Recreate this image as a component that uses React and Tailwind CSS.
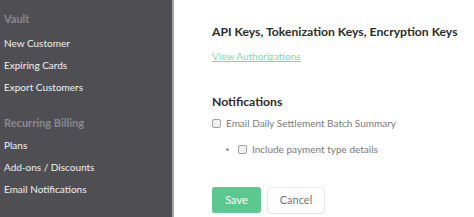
export default function App() {
  const font = { fontFamily: "Lato, 'Open Sans', sans-serif" };
  return (
    <div className="flex w-[474px] h-[217px] overflow-hidden bg-white" style={font}>
      <aside className="w-[174px] shrink-0 bg-[#4f4e53] border-r-2 border-[#a6a5a9] pl-[4px] pt-[8px] text-[10px]">
        <div className="h-[22px] flex items-center text-[11px] font-bold text-[#8b8a8f]">Vault</div>
        <div className="mt-[2px] h-[22px] flex items-center text-[#f2f2f2]">New Customer</div>
        <div className="h-[22px] flex items-center text-[#f2f2f2]">Expiring Cards</div>
        <div className="h-[22px] flex items-center text-[#f2f2f2]">Export Customers</div>
        <div className="mt-[14px] h-[22px] flex items-center text-[11px] font-bold text-[#8b8a8f]">Recurring Billing</div>
        <div className="h-[22px] flex items-center text-[#f2f2f2]">Plans</div>
        <div className="h-[22px] flex items-center text-[#f2f2f2]">Add-ons / Discounts</div>
        <div className="h-[22px] flex items-center text-[#f2f2f2]">Email Notifications</div>
      </aside>
      <main className="flex-1 pl-[38px] pt-[23px]">
        <h2 className="text-[12.2px] font-bold text-[#2b2b2b] leading-[18px]">API Keys, Tokenization Keys, Encryption Keys</h2>
        <a className="block mt-[8px] text-[10px] leading-[14px] text-[#86d7ad] underline">View Authorizations</a>
        <h2 className="mt-[30px] text-[12.2px] font-bold text-[#2b2b2b] leading-[18px]">Notifications</h2>
        <label className="mt-[5px] flex items-center gap-[5px] text-[10px] text-[#7a7a7a] leading-[14px]">
          <span className="w-[9px] h-[9px] border border-[#a0a0a0] rounded-[2px] bg-[#f0f0f0]"></span>
          Email Daily Settlement Batch Summary
        </label>
        <div className="mt-[12px] ml-[14px] flex items-center text-[10px] text-[#7a7a7a] leading-[14px]">
          <span className="w-[3px] h-[3px] rounded-full bg-[#9a9a9a] mr-[9px]"></span>
          <span className="w-[9px] h-[9px] border border-[#a0a0a0] rounded-[2px] bg-[#f0f0f0] mr-[5px]"></span>
          Include payment type details
        </div>
        <div className="mt-[31px] flex gap-[6px]">
          <button className="w-[49px] h-[26px] rounded-[3px] bg-[#5cc78f] text-white text-[11px]">Save</button>
          <button className="w-[58px] h-[27px] rounded-[3px] bg-white border border-[#e6e6e6] text-[#777] text-[11px]">Cancel</button>
        </div>
      </main>
    </div>
  );
}
